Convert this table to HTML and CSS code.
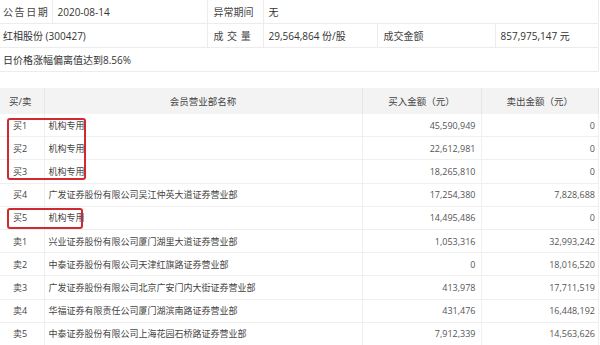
FILE: index.html
```html
<!DOCTYPE html>
<html lang="zh-CN">
<head>
    <meta charset="UTF-8">
    <title>龙虎榜</title>
    <link rel="stylesheet" href="styles.css">
</head>
<body>
    <div class="page">
        <table class="info">
            <colgroup>
                <col style="width:52px">
                <col style="width:155px">
                <col style="width:56px">
                <col style="width:114px">
                <col style="width:118px">
                <col>
            </colgroup>
            <tr>
                <td class="label spaced">公告日期</td>
                <td class="value">2020-08-14</td>
                <td class="label">异常期间</td>
                <td class="value" colspan="3">无</td>
            </tr>
            <tr>
                <td colspan="2">红相股份 (300427)</td>
                <td class="label wide">成 交 量</td>
                <td class="value">29,564,864 份/股</td>
                <td class="label">成交金额</td>
                <td class="value">857,975,147 元</td>
            </tr>
            <tr>
                <td colspan="6">日价格涨幅偏离值达到8.56%</td>
            </tr>
        </table>

        <div class="list-wrap">
            <table class="list">
                <colgroup>
                    <col style="width:44px">
                    <col style="width:318px">
                    <col style="width:119px">
                    <col>
                </colgroup>
                <thead>
                    <tr>
                        <th class="side">买/卖</th>
                        <th>会员营业部名称</th>
                        <th>买入金额（元）</th>
                        <th>卖出金额（元）</th>
                    </tr>
                </thead>
                <tbody>
                    <tr><td class="side">买1</td><td>机构专用</td><td class="num">45,590,949</td><td class="num">0</td></tr>
                    <tr><td class="side">买2</td><td>机构专用</td><td class="num">22,612,981</td><td class="num">0</td></tr>
                    <tr><td class="side">买3</td><td>机构专用</td><td class="num">18,265,810</td><td class="num">0</td></tr>
                    <tr><td class="side">买4</td><td>广发证券股份有限公司吴江仲英大道证券营业部</td><td class="num">17,254,380</td><td class="num">7,828,688</td></tr>
                    <tr><td class="side">买5</td><td>机构专用</td><td class="num">14,495,486</td><td class="num">0</td></tr>
                    <tr><td class="side">卖1</td><td>兴业证券股份有限公司厦门湖里大道证券营业部</td><td class="num">1,053,316</td><td class="num">32,993,242</td></tr>
                    <tr><td class="side">卖2</td><td>中泰证券股份有限公司天津红旗路证券营业部</td><td class="num">0</td><td class="num">18,016,520</td></tr>
                    <tr><td class="side">卖3</td><td>广发证券股份有限公司北京广安门内大街证券营业部</td><td class="num">413,978</td><td class="num">17,711,519</td></tr>
                    <tr><td class="side">卖4</td><td>华福证券有限责任公司厦门湖滨南路证券营业部</td><td class="num">431,476</td><td class="num">16,448,192</td></tr>
                    <tr><td class="side">卖5</td><td>中泰证券股份有限公司上海花园石桥路证券营业部</td><td class="num">7,912,339</td><td class="num">14,563,626</td></tr>
                </tbody>
            </table>
            <div class="mark mark-top"></div>
            <div class="mark mark-bottom"></div>
        </div>
    </div>
</body>
</html>
```

FILE: styles.css
```css
body {
    margin: 0;
    padding: 0;
    background: #fff;
    font-family: "Open Sans", "Noto Sans CJK SC", sans-serif;
    color: #333;
    overflow: hidden;
}

.page {
    width: 599px;
}

table {
    border-collapse: collapse;
    table-layout: fixed;
    width: 100%;
}

.info td {
    height: 23px;
    padding: 0 0 0 3px;
    border-bottom: 1px solid #ececec;
    border-right: 1px solid #ececec;
    font-size: 10px;
    white-space: nowrap;
}

.info td.value {
    padding-left: 5px;
}

.info td.label {
    padding-left: 6px;
    color: #444;
}

.info td.spaced {
    padding-left: 3px;
    letter-spacing: 1.6px;
}

.info td.wide {
    letter-spacing: 0.5px;
}

.list-wrap {
    position: relative;
    margin-top: 16px;
}

.list th {
    height: 26px;
    padding: 0;
    background: #f3f3f3;
    border-right: 1px solid #e6e6e6;
    font-size: 9.5px;
    font-weight: normal;
    color: #444;
    text-align: center;
}

.list th.side {
    text-align: left;
    padding-left: 9px;
}

.list td {
    height: 22.2px;
    padding: 0 0 0 4px;
    border-bottom: 1px solid #efefef;
    border-right: 1px solid #efefef;
    font-size: 9px;
    color: #444;
    white-space: nowrap;
}

.list td.side {
    padding-left: 13px;
}

.list td.num {
    text-align: right;
    padding: 0 5px 0 0;
    color: #555;
}

.list td.num:last-child {
    padding-right: 3px;
}

.mark {
    position: absolute;
    left: 7px;
    border: 2px solid #cf2a2f;
    border-radius: 3px;
    box-sizing: border-box;
}

.mark-top {
    top: 30px;
    width: 79px;
    height: 62px;
}

.mark-bottom {
    top: 120px;
    width: 76px;
    height: 21px;
}
```
